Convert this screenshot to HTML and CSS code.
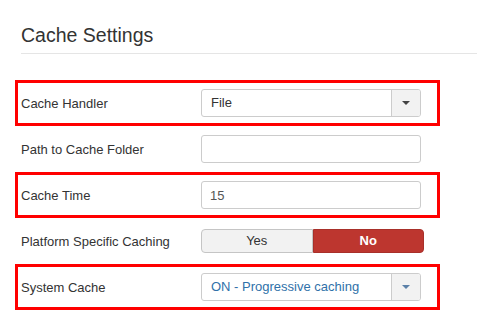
FILE: index.html
```html
<!DOCTYPE html>
<html lang="en">
<head>
  <meta charset="UTF-8">
  <meta name="viewport" content="width=device-width, initial-scale=1.0">
  <title>Cache Settings</title>
  <link rel="stylesheet" href="styles.css">
</head>
<body>
  <div class="container">
    <h2 class="section-title">Cache Settings</h2>

    <!-- Cache handler -->
    <div class="form-row marked">
      <label class="row-label">Cache Handler</label>
      <div class="chosen">
        <span class="chosen-value">File</span>
        <span class="chosen-btn"><span class="caret"></span></span>
      </div>
    </div>

    <div class="form-row">
      <label class="row-label">Path to Cache Folder</label>
      <input class="text-input" type="text" value="">
    </div>

    <div class="form-row marked">
      <label class="row-label">Cache Time</label>
      <input class="text-input" type="text" value="15">
    </div>

    <!-- Yes / No toggle -->
    <div class="form-row">
      <label class="row-label">Platform Specific Caching</label>
      <div class="toggle">
        <span class="toggle-btn">Yes</span>
        <span class="toggle-btn active-no">No</span>
      </div>
    </div>

    <div class="form-row marked">
      <label class="row-label">System Cache</label>
      <div class="chosen chosen-blue">
        <span class="chosen-value">ON - Progressive caching</span>
        <span class="chosen-btn"><span class="caret"></span></span>
      </div>
    </div>
  </div>
</body>
</html>
```

FILE: styles.css
```css
body {
  margin: 0;
  font-family: 'Liberation Sans', Arial, sans-serif;
  font-size: 13px;
  color: #333;
  background: #fff;
}

.container {
  padding: 25px 0 0 21px;
}

.section-title {
  margin: 0 0 26px 0;
  font-size: 19.5px;
  font-weight: normal;
  line-height: 21px;
  color: #333;
  padding-bottom: 7px;
  border-bottom: 1px solid #e5e5e5;
}

/* one settings row, red outline when marked */
.form-row {
  display: flex;
  align-items: center;
  width: 416px;
  height: 40px;
  margin-left: -6px;
  padding: 0 0 0 3px;
  border: 3px solid transparent;
}

.form-row.marked {
  border-color: #ff0000;
}

.row-label {
  width: 180px;
  flex: none;
}

.chosen {
  display: flex;
  width: 220px;
  height: 28px;
  box-sizing: border-box;
  border: 1px solid #ccc;
  border-radius: 3px;
  background: #fff;
  overflow: hidden;
}

.chosen-value {
  flex: 1;
  padding-left: 9px;
  line-height: 26px;
  font-size: 13px;
}

.chosen-btn {
  width: 28px;
  flex: none;
  display: flex;
  align-items: center;
  justify-content: center;
  background: #f2f2f2;
  border-left: 1px solid #ccc;
}

.caret {
  width: 0;
  height: 0;
  border-left: 4px solid transparent;
  border-right: 4px solid transparent;
  border-top: 4px solid #444;
}

.chosen-blue .chosen-value {
  color: #3071a9;
}

.chosen-blue .caret {
  border-top-color: #5b80a8;
}

.text-input {
  width: 220px;
  height: 28px;
  box-sizing: border-box;
  margin: 0;
  padding: 0 8px;
  border: 1px solid #ccc;
  border-radius: 3px;
  font-family: inherit;
  font-size: 13px;
  color: #555;
}

.toggle {
  display: flex;
  width: 223px;
  height: 24px;
}

.toggle-btn {
  flex: 1;
  text-align: center;
  line-height: 22px;
  border: 1px solid #c5c5c5;
  background: #f2f2f2;
  color: #333;
}

.toggle-btn:first-child {
  border-radius: 4px 0 0 4px;
}

.toggle-btn.active-no {
  background: #bd362f;
  border-color: #a8302a;
  color: #fff;
  font-weight: bold;
  border-radius: 0 4px 4px 0;
}
```
